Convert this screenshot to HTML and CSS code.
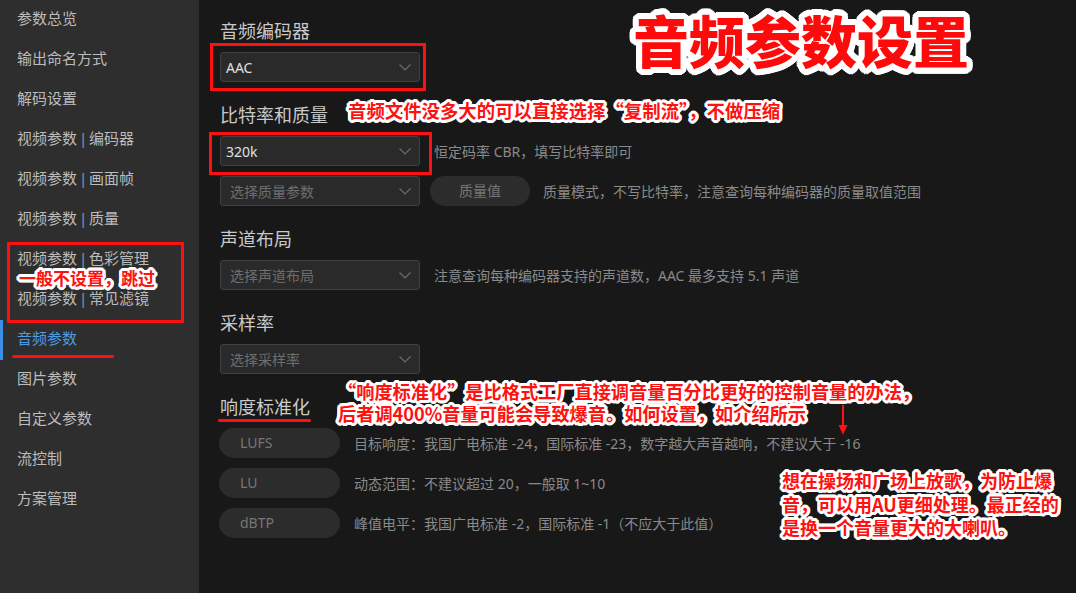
FILE: index.html
```html
<!DOCTYPE html>
<html lang="zh-CN">
<head>
<meta charset="utf-8">
<title>音频参数</title>
<link rel="stylesheet" href="styles.css">
</head>
<body>
<div class="app">
  <aside class="sidebar">
    <nav class="nav">
      <div class="nav-item">参数总览</div>
      <div class="nav-item">输出命名方式</div>
      <div class="nav-item">解码设置</div>
      <div class="nav-item">视频参数 <span class="pipe">|</span> 编码器</div>
      <div class="nav-item">视频参数 <span class="pipe">|</span> 画面帧</div>
      <div class="nav-item">视频参数 <span class="pipe">|</span> 质量</div>
      <div class="nav-item">视频参数 <span class="pipe">|</span> 色彩管理</div>
      <div class="nav-item">视频参数 <span class="pipe">|</span> 常见滤镜</div>
      <div class="nav-item active">音频参数</div>
      <div class="nav-item">图片参数</div>
      <div class="nav-item">自定义参数</div>
      <div class="nav-item">流控制</div>
      <div class="nav-item">方案管理</div>
    </nav>
  </aside>

  <main class="content">
    <section class="group first">
      <h3 class="group-title">音频编码器</h3>
      <div class="row">
        <div class="select"><span class="value">AAC</span><svg class="chev" viewBox="0 0 12 7"><polyline points="0.5,0.5 6,6 11.5,0.5"/></svg></div>
      </div>
    </section>

    <section class="group">
      <h3 class="group-title">比特率和质量</h3>
      <div class="row">
        <div class="select"><span class="value">320k</span><svg class="chev" viewBox="0 0 12 7"><polyline points="0.5,0.5 6,6 11.5,0.5"/></svg></div>
        <span class="hint">恒定码率 CBR，填写比特率即可</span>
      </div>
      <div class="row">
        <div class="select"><span class="placeholder">选择质量参数</span><svg class="chev" viewBox="0 0 12 7"><polyline points="0.5,0.5 6,6 11.5,0.5"/></svg></div>
        <div class="pill-input center">质量值</div>
        <span class="hint after-pill">质量模式，不写比特率，注意查询每种编码器的质量取值范围</span>
      </div>
    </section>

    <section class="group">
      <h3 class="group-title">声道布局</h3>
      <div class="row">
        <div class="select"><span class="placeholder">选择声道布局</span><svg class="chev" viewBox="0 0 12 7"><polyline points="0.5,0.5 6,6 11.5,0.5"/></svg></div>
        <span class="hint">注意查询每种编码器支持的声道数，AAC 最多支持 5.1 声道</span>
      </div>
    </section>

    <section class="group">
      <h3 class="group-title">采样率</h3>
      <div class="row">
        <div class="select"><span class="placeholder">选择采样率</span><svg class="chev" viewBox="0 0 12 7"><polyline points="0.5,0.5 6,6 11.5,0.5"/></svg></div>
      </div>
    </section>

    <section class="group">
      <h3 class="group-title">响度标准化</h3>
      <div class="row">
        <div class="pill-input">LUFS</div>
        <span class="hint">目标响度：我国广电标准 -24，国际标准 -23，数字越大声音越响，不建议大于 -16</span>
      </div>
      <div class="row">
        <div class="pill-input">LU</div>
        <span class="hint">动态范围：不建议超过 20，一般取 1~10</span>
      </div>
      <div class="row">
        <div class="pill-input">dBTP</div>
        <span class="hint">峰值电平：我国广电标准 -2，国际标准 -1（不应大于此值）</span>
      </div>
    </section>
  </main>

  <!-- annotations drawn over the screenshot -->
  <div class="mark box-side"></div>
  <div class="mark line-side"></div>
  <div class="mark box-codec"></div>
  <div class="mark box-bitrate"></div>
  <div class="mark line-loud"></div>

  <div class="anno anno-title">音频参数设置</div>
  <div class="anno anno-side">一般不设置，跳过</div>
  <div class="anno anno-copy">音频文件没多大的可以直接选择“复制流”，不做压缩</div>
  <div class="anno anno-loud">“响度标准化”是比格式工厂直接调音量百分比更好的控制音量的办法，<br>后者调400%音量可能会导致爆音。如何设置，如介绍所示</div>
  <div class="anno anno-tip">想在操场和广场上放歌，为防止爆<br>音，可以用AU更细处理。最正经的<br>是换一个音量更大的大喇叭。</div>
  <svg class="arrow" viewBox="0 0 14 32"><line x1="7" y1="1" x2="7" y2="24"/><polygon points="2.5,21 11.5,21 7,31"/></svg>
</div>
</body>
</html>
```

FILE: styles.css
```css
* { box-sizing: border-box; }

html, body {
  margin: 0;
  padding: 0;
  background: #181818;
}

body {
  font-family: "Noto Sans", "Noto Sans CJK SC", sans-serif;
  width: 1076px;
  height: 593px;
  overflow: hidden;
}

.app {
  position: relative;
  display: flex;
  width: 1076px;
  height: 593px;
}

/* ---------- sidebar ---------- */
.sidebar {
  width: 199px;
  flex: none;
  background: #2e2e2e;
}

.nav {
  display: flex;
  flex-direction: column;
}

.nav-item {
  height: 40px;
  line-height: 36px;
  padding-left: 17px;
  font-size: 15px;
  color: #bcbcbc;
  white-space: nowrap;
  word-spacing: -2px;
}

.nav-item .pipe {
  color: #7f9bb8;
}

.nav-item.active {
  color: #4a9be6;
  box-shadow: inset 3px 0 0 #3d8ee4;
}

/* ---------- content ---------- */
.content {
  flex: 1;
  padding: 19px 0 0 21px;
}

.group { margin-top: 21px; }
.group.first { margin-top: 0; }

.group-title {
  margin: 0 0 9px;
  font-size: 18px;
  font-weight: 400;
  line-height: 24px;
  color: #c9c9c9;
}

.row {
  display: flex;
  align-items: center;
  height: 30px;
}
.row + .row { margin-top: 10px; }

.select {
  position: relative;
  display: flex;
  align-items: center;
  width: 200px;
  height: 30px;
  background: #2a2a2a;
  border: 1px solid #404040;
  border-radius: 3px;
  font-size: 14px;
}

.select .value {
  padding-left: 5px;
  color: #e0e0e0;
}

.select .placeholder {
  padding-left: 9px;
  color: #6e6e6e;
}

.chev {
  margin-left: auto;
  margin-right: 8px;
  width: 12px;
  height: 7px;
  fill: none;
  stroke: #6c6c6c;
  stroke-width: 1.2;
}

.pill-input {
  width: 121px;
  height: 30px;
  line-height: 30px;
  padding-left: 21px;
  border-radius: 15px;
  background: #2c2c2c;
  color: #767676;
  font-size: 14px;
  margin-left: -1px;
}

.pill-input.center {
  width: 100px;
  margin-left: 10px;
  padding-left: 0;
  text-align: center;
}

.hint {
  margin-left: 14px;
  font-size: 14px;
  color: #8a8a8a;
  white-space: nowrap;
}
.hint.after-pill { margin-left: 13px; }

/* ---------- annotation overlay ---------- */
.mark {
  position: absolute;
  border: 3px solid #ff1010;
}
.box-side { left: 7px; top: 242px; width: 177px; height: 81px; }
.box-codec { left: 210px; top: 43px; width: 216px; height: 48px; }
.box-bitrate { left: 209px; top: 132px; width: 223px; height: 43px; }
.line-side { left: 12px; top: 355px; width: 102px; height: 0; border-width: 3px 0 0 0; border-radius: 2px; }
.line-loud { left: 218px; top: 419px; width: 93px; height: 0; border-width: 3px 0 0 0; border-radius: 2px; }

.anno {
  position: absolute;
  font-family: "Noto Sans CJK SC", sans-serif;
  font-weight: 700;
  color: #ff1111;
  white-space: nowrap;
  text-shadow:
    3px 0 0 #fff, -3px 0 0 #fff, 0 3px 0 #fff, 0 -3px 0 #fff,
    2px 2px 0 #fff, -2px 2px 0 #fff, 2px -2px 0 #fff, -2px -2px 0 #fff,
    3px 1px 0 #fff, -3px 1px 0 #fff, 3px -1px 0 #fff, -3px -1px 0 #fff,
    1px 3px 0 #fff, -1px 3px 0 #fff, 1px -3px 0 #fff, -1px -3px 0 #fff;
}

.anno-title {
  left: 633px;
  top: 6px;
  font-size: 56px;
  line-height: 66px;
  font-weight: 900;
  color: #ff0a0a;
  text-shadow:
    6px 0 0 #fff, 5.8px 1.6px 0 #fff, 5.2px 3px 0 #fff, 4.2px 4.2px 0 #fff,
    3px 5.2px 0 #fff, 1.6px 5.8px 0 #fff, 0 6px 0 #fff, -1.6px 5.8px 0 #fff,
    -3px 5.2px 0 #fff, -4.2px 4.2px 0 #fff, -5.2px 3px 0 #fff, -5.8px 1.6px 0 #fff,
    -6px 0 0 #fff, -5.8px -1.6px 0 #fff, -5.2px -3px 0 #fff, -4.2px -4.2px 0 #fff,
    -3px -5.2px 0 #fff, -1.6px -5.8px 0 #fff, 0 -6px 0 #fff, 1.6px -5.8px 0 #fff,
    3px -5.2px 0 #fff, 4.2px -4.2px 0 #fff, 5.2px -3px 0 #fff, 5.8px -1.6px 0 #fff,
    3px 0 0 #fff, -3px 0 0 #fff, 0 3px 0 #fff, 0 -3px 0 #fff,
    2px 2px 0 #fff, -2px 2px 0 #fff, 2px -2px 0 #fff, -2px -2px 0 #fff;
}

.anno-side { left: 19px; top: 266px; font-size: 17px; line-height: 24px; }
.anno-copy { left: 348px; top: 97px; font-size: 18.4px; line-height: 26px; }
.anno-loud { left: 338px; top: 380px; font-size: 18.2px; line-height: 22px; }
.anno-tip { left: 782px; top: 469px; font-size: 18px; line-height: 23.5px; }

.arrow {
  position: absolute;
  left: 836px;
  top: 404px;
  width: 14px;
  height: 32px;
}
.arrow line { stroke: #ff1111; stroke-width: 2; }
.arrow polygon { fill: #ff1111; }
```
